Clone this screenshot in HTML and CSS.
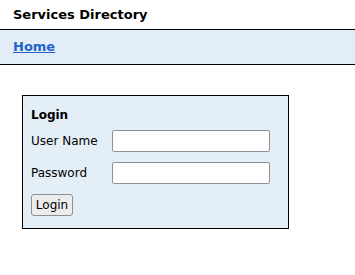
FILE: index.html
```html
<!DOCTYPE html>
<html>
<head>
<meta charset="utf-8">
<link rel="stylesheet" href="styles.css">
</head>
<body>
<div class="header">Services Directory</div>
<div class="nav"><a href="#" class="nav-link">Home</a></div>
<div class="login-box">
  <div class="login-title">Login</div>
  <div class="login-grid">
    <label class="login-label">User Name</label>
    <input class="login-input" type="text">
    <label class="login-label">Password</label>
    <input class="login-input" type="password">
  </div>
  <button class="login-btn">Login</button>
</div>
</body>
</html>
```
FILE: styles.css
```css
html, body {
  margin: 0;
  padding: 0;
  background: #ffffff;
  font-family: "DejaVu Sans", Verdana, sans-serif;
  color: #000;
}
.header {
  height: 29px;
  line-height: 29px;
  padding-left: 13px;
  font-size: 13px;
  font-weight: bold;
  border-bottom: 1px solid #000;
}
.nav {
  height: 34px;
  line-height: 31px;
  padding-left: 13px;
  background: #e3edf7;
  border-bottom: 1px solid #000;
}
.nav-link {
  font-size: 13px;
  font-weight: bold;
  color: #1e63c7;
  text-decoration: underline;
}
.login-box {
  box-sizing: border-box;
  margin: 30px 0 0 22px;
  width: 267px;
  height: 134px;
  border: 1px solid #000;
  background: #e4eef7;
  padding: 12px 0 0 8px;
  font-size: 12px;
}
.login-title {
  font-weight: bold;
  line-height: 15px;
  margin-bottom: 7px;
}
.login-grid {
  display: grid;
  grid-template-columns: 81px 158px;
  row-gap: 10px;
  align-items: center;
}
.login-label {
  line-height: 15px;
}
.login-input {
  box-sizing: border-box;
  width: 158px;
  height: 22px;
  margin: 0;
  border: 1px solid #8d9196;
  border-radius: 2px;
  background: #fff;
}
.login-btn {
  box-sizing: border-box;
  margin-top: 10px;
  width: 42px;
  height: 22px;
  padding: 0;
  font-family: "DejaVu Sans", Verdana, sans-serif;
  font-size: 12px;
  color: #000;
  background: #ececec;
  border: 1px solid #8f8f8f;
  border-radius: 3px;
}
```
